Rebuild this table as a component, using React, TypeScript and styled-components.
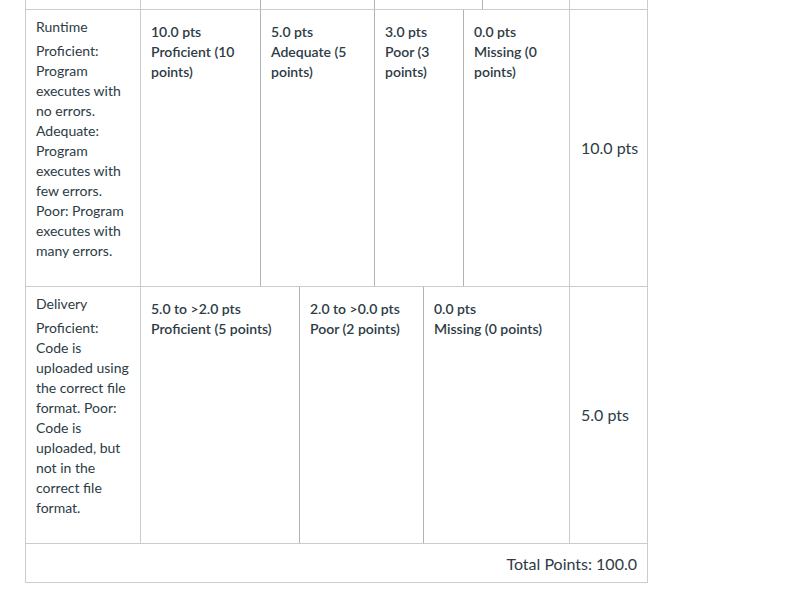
import React from 'react';
import styled, { createGlobalStyle } from 'styled-components';

const GlobalStyle = createGlobalStyle`
  body {
    margin: 0;
    background: #fff;
    font-family: Lato, 'Noto Sans', sans-serif;
    color: #2d3b45;
  }
`;

const Table = styled.div`
  margin-left: 25px;
  width: 621px;
  border-left: 1px solid #c7cdd1;
  border-right: 1px solid #c7cdd1;
  border-bottom: 1px solid #c7cdd1;
`;

const Row = styled.div<{ $stub?: boolean }>`
  display: grid;
  grid-template-columns: 115px 429px 77px;
  border-top: ${(p) => (p.$stub ? 'none' : '1px solid #c7cdd1')};
  height: ${(p) => (p.$stub ? '9px' : 'auto')};
  overflow: hidden;
`;

const Criterion = styled.div`
  border-right: 1px solid #c7cdd1;
  padding: 7px 10px 25px 10px;
  font-size: 14px;
  line-height: 20px;
`;

const CriterionTitle = styled.div`
  margin-bottom: 4px;
`;

const Ratings = styled.div`
  display: flex;
  border-right: 1px solid #c7cdd1;
`;

const Rating = styled.div<{ $w: number; $last?: boolean }>`
  box-sizing: border-box;
  width: ${(p) => p.$w}px;
  flex: none;
  border-right: ${(p) => (p.$last ? 'none' : '1px solid #adb3b8')};
  padding: 12px 10px 10px 10px;
  font-size: 14px;
  line-height: 20px;
  font-weight: 600;

  &:empty {
    padding: 0;
  }
`;

const Points = styled.div`
  display: flex;
  align-items: center;
  padding: 0 10px 0 11px;
  font-size: 16px;
  line-height: 20px;
  white-space: nowrap;
`;

const Footer = styled.div`
  border-top: 1px solid #c7cdd1;
  height: 38px;
  display: flex;
  align-items: center;
  justify-content: flex-end;
  padding-right: 10px;
  font-size: 16px;
`;

type Tier = { w: number; pts?: string; label?: string };

const criteria: {
  title: string;
  desc: string;
  points: string;
  tiers: Tier[];
}[] = [
  {
    title: 'Runtime',
    desc: 'Proficient: Program executes with no errors. Adequate: Program executes with few errors. Poor: Program executes with many errors.',
    points: '10.0 pts',
    tiers: [
      { w: 120, pts: '10.0 pts', label: 'Proficient (10 points)' },
      { w: 114, pts: '5.0 pts', label: 'Adequate (5 points)' },
      { w: 89, pts: '3.0 pts', label: 'Poor (3 points)' },
      { w: 105, pts: '0.0 pts', label: 'Missing (0 points)' },
    ],
  },
  {
    title: 'Delivery',
    desc: 'Proficient: Code is uploaded using the correct file format. Poor: Code is uploaded, but not in the correct file format.',
    points: '5.0 pts',
    tiers: [
      { w: 159, pts: '5.0 to >2.0 pts', label: 'Proficient (5 points)' },
      { w: 124, pts: '2.0 to >0.0 pts', label: 'Poor (2 points)' },
      { w: 145, pts: '0.0 pts', label: 'Missing (0 points)' },
    ],
  },
];

// tail of the previous criterion row, scrolled mostly out of view
const stubTiers = [120, 114, 108, 86];

export default function App() {
  return (
    <>
      <GlobalStyle />
      <Table>
        <Row $stub>
          <Criterion />
          <Ratings>
            {stubTiers.map((w, i) => (
              <Rating key={i} $w={w} $last={i === stubTiers.length - 1} />
            ))}
          </Ratings>
          <Points />
        </Row>
        {criteria.map((c) => (
          <Row key={c.title}>
            <Criterion>
              <CriterionTitle>{c.title}</CriterionTitle>
              <div>{c.desc}</div>
            </Criterion>
            <Ratings>
              {c.tiers.map((t, i) => (
                <Rating key={i} $w={t.w} $last={i === c.tiers.length - 1}>
                  <div>{t.pts}</div>
                  <div>{t.label}</div>
                </Rating>
              ))}
            </Ratings>
            <Points>{c.points}</Points>
          </Row>
        ))}
        <Footer>Total Points: 100.0</Footer>
      </Table>
    </>
  );
}
